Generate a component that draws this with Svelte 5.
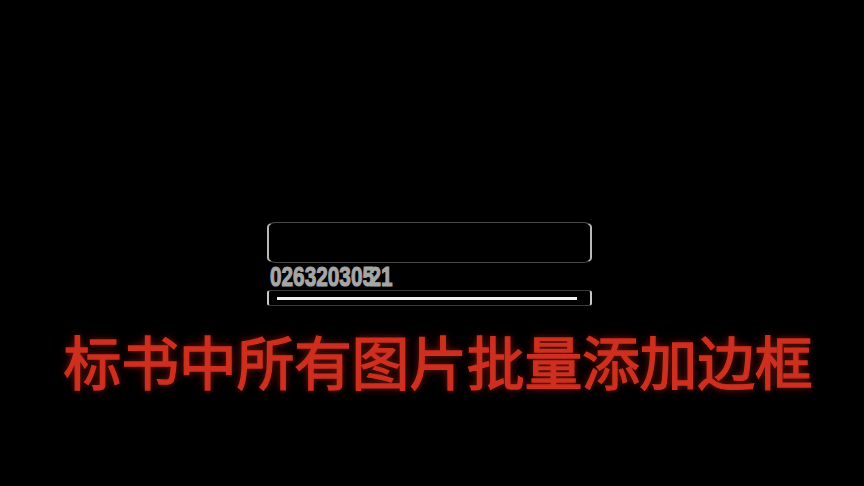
<script>
  const digits = '026320305';
  const title = '标书中所有图片批量添加边框';
</script>

<main class="page">
  <section class="loader">
    <div class="frame"></div>
    <div class="code">{digits}<span class="over">2</span>1</div>
    <div class="frame small">
      <div class="fill"></div>
    </div>
  </section>
  <h1 class="title">{title}</h1>
</main>

<style>
  :global(body) {
    margin: 0;
    background: #000;
  }

  .page {
    width: 864px;
    height: 486px;
    box-sizing: border-box;
    padding-top: 222px;
    background: #000;
    overflow: hidden;
    display: flex;
    flex-direction: column;
    align-items: center;
  }

  .loader {
    width: 325px;
    margin-left: -5px;
    display: flex;
    flex-direction: column;
  }

  .frame {
    height: 41px;
    box-sizing: border-box;
    border-style: solid;
    border-width: 1px 2px;
    border-color: #4a4a4a #b8b8b8;
    border-radius: 9px / 5px;
  }

  .frame.small {
    height: 16px;
    border-width: 1px 2px;
    border-color: #3c3c3c #c8c8c8;
    border-radius: 3px;
    display: flex;
    align-items: center;
    padding: 0 13px 0 8px;
  }

  .code {
    height: 27px;
    margin-left: 3px;
    font: 700 27px/29px "Liberation Sans", sans-serif;
    color: #a6a6a6;
    -webkit-text-stroke: 1.1px #a6a6a6;
    white-space: nowrap;
    transform: scaleX(0.77);
    transform-origin: left center;
  }

  .over {
    margin-left: -6px;
  }

  .fill {
    flex: 1;
    height: 3px;
    background: #f2f2f2;
  }

  .title {
    margin: 18px 0 0 12px;
    font: 400 58px/72px "Noto Sans CJK SC", sans-serif;
    letter-spacing: -0.4px;
    color: #cf2f1e;
    -webkit-text-stroke: 1.3px #cf2f1e;
    white-space: nowrap;
    text-shadow: 0 0 6px rgba(170, 35, 20, 0.7), 0 0 13px rgba(120, 22, 12, 0.5);
  }
</style>
